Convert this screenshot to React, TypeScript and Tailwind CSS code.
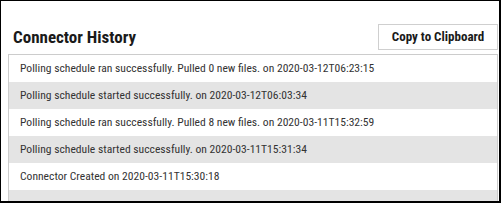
const rows = [
  "Polling schedule ran successfully. Pulled 0 new files. on 2020-03-12T06:23:15",
  "Polling schedule started successfully. on 2020-03-12T06:03:34",
  "Polling schedule ran successfully. Pulled 8 new files. on 2020-03-11T15:32:59",
  "Polling schedule started successfully. on 2020-03-11T15:31:34",
  "Connector Created on 2020-03-11T15:30:18",
  "",
];

export default function App() {
  return (
    <div className="w-[501px] h-[203px] bg-white border-l border-t border-r-2 border-b-2 border-black overflow-hidden font-['Roboto_Condensed','Liberation_Sans_Narrow',Roboto,sans-serif] text-[#222]">
      <div className="pl-[7px] pr-px">
        <div className="flex items-end justify-between h-[53px] pb-[4px]">
          <h2 className="pl-[5px] pb-[4px] text-[17px] font-bold leading-none text-[#1a1a1a]">Connector History</h2>
          <button className="w-[120px] h-[26px] border border-[#cfcfcf] bg-white text-[13px] font-bold text-[#1a1a1a]">
            Copy to Clipboard
          </button>
        </div>
        <div className="border-t border-l border-r border-[#cccccc]">
          {rows.map((r, i) => (
            <div
              key={i}
              className={`h-[27px] flex items-center pl-[11px] text-[11.6px] text-[#333] ${i % 2 === 1 ? "bg-[#e4e4e4]" : "bg-white"}`}
            >
              {r}
            </div>
          ))}
        </div>
      </div>
    </div>
  );
}
